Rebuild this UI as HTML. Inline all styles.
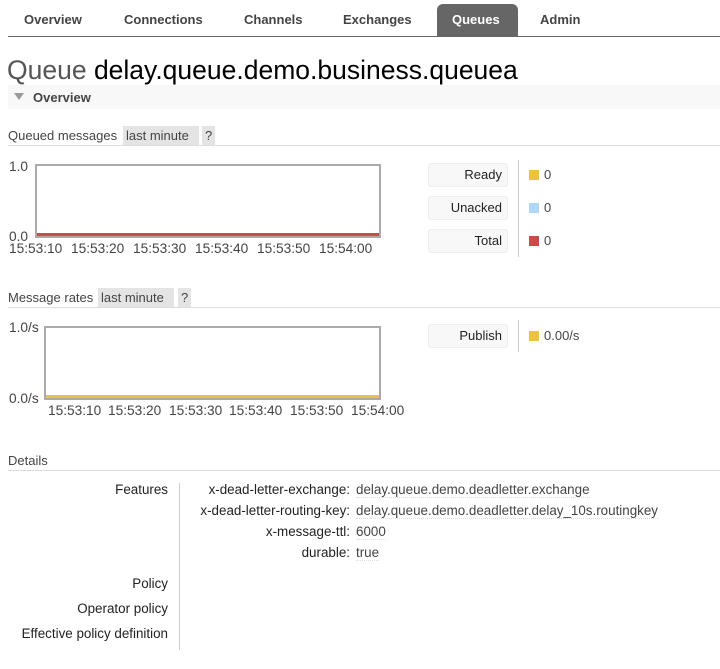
<!DOCTYPE html>
<html><head><meta charset="utf-8"><style>
*{margin:0;padding:0;box-sizing:border-box}
body{width:720px;height:669px;background:#fff;font-family:"Liberation Sans",sans-serif;color:#444;position:relative;overflow:hidden;font-size:13px}
.a{position:absolute;white-space:nowrap}
.tab{position:absolute;top:12px;font-weight:bold;font-size:13px;color:#444}
.hl{position:absolute;height:1px;background:#ddd}
.btn{position:absolute;background:#e4e4e4;height:19px;line-height:19px;padding:0 3px;font-size:13px}
.chart{position:absolute;border:2px solid #aaa;background:#fff}
.leg{position:absolute;left:428px;width:80px;height:24px;background:#f8f8f8;border:1px solid #eee;border-radius:3px;text-align:right;padding-right:5px;line-height:22px;color:#222}
.sq{position:absolute;left:529px;width:10px;height:10px}
.val{position:absolute;left:544px;color:#444}
.vl{position:absolute;width:1px;background:#ccc}
.t{font-size:13.7px;color:#444}
.d{font-size:13.4px}
.k{position:absolute;right:370px;text-align:right;color:#222}
.v{position:absolute;left:356px;color:#444;border-bottom:1px dotted #ddd}
</style></head><body>
<div class="a" style="left:437px;top:4px;width:81px;height:33px;background:#666;border-radius:6px 6px 0 0"></div>
<div class="tab" style="left:24px">Overview</div>
<div class="tab" style="left:124px">Connections</div>
<div class="tab" style="left:244px">Channels</div>
<div class="tab" style="left:343px">Exchanges</div>
<div class="tab" style="left:452px;color:#fff">Queues</div>
<div class="tab" style="left:540px">Admin</div>
<div class="a" style="left:8px;top:36px;width:712px;height:1px;background:#666"></div>

<div class="a" style="left:7px;top:55px;font-size:26.5px;color:#555">Queue <span style="color:#000">delay.queue.demo.business.queuea</span></div>
<div class="a" style="left:8px;top:85px;width:712px;height:24px;background:#f8f8f8"></div>
<div class="a" style="left:14px;top:93px;width:0;height:0;border-left:5px solid transparent;border-right:5px solid transparent;border-top:7px solid #999"></div>
<div class="a" style="left:33px;top:90px;font-weight:bold;color:#444">Overview</div>

<div class="a" style="left:8px;top:128px">Queued messages</div>
<div class="btn" style="left:123px;top:126px;width:76px">last minute</div>
<div class="btn" style="left:202px;top:126px;width:13px">?</div>
<div class="hl" style="left:8px;top:145px;width:712px"></div>

<div class="chart" style="left:35px;top:164px;width:346px;height:74px"><div style="position:absolute;left:0;right:0;bottom:0;height:3px;background:#c94b4b"></div></div>
<div class="a t" style="left:9px;top:159px">1.0</div>
<div class="a t" style="left:9px;top:229px">0.0</div>
<div class="a t" style="left:9px;top:241px">15:53:10</div>
<div class="a t" style="left:71px;top:241px">15:53:20</div>
<div class="a t" style="left:133px;top:241px">15:53:30</div>
<div class="a t" style="left:195px;top:241px">15:53:40</div>
<div class="a t" style="left:257px;top:241px">15:53:50</div>
<div class="a t" style="left:319px;top:241px">15:54:00</div>

<div class="leg" style="top:163px">Ready</div>
<div class="leg" style="top:196px">Unacked</div>
<div class="leg" style="top:229px">Total</div>
<div class="vl" style="left:518px;top:160px;height:97px"></div>
<div class="sq" style="top:170px;background:#edc240"></div><div class="val" style="top:167px">0</div>
<div class="sq" style="top:203px;background:#afd8f8"></div><div class="val" style="top:200px">0</div>
<div class="sq" style="top:236px;background:#cb4b4b"></div><div class="val" style="top:233px">0</div>

<div class="a" style="left:8px;top:290px">Message rates</div>
<div class="btn" style="left:98px;top:288px;width:76px">last minute</div>
<div class="btn" style="left:178px;top:288px;width:13px">?</div>
<div class="hl" style="left:8px;top:307px;width:712px"></div>

<div class="chart" style="left:44px;top:326px;width:337px;height:74px"><div style="position:absolute;left:0;right:0;bottom:0;height:3px;background:#edc240"></div></div>
<div class="a t" style="left:9px;top:320px">1.0/s</div>
<div class="a t" style="left:9px;top:391px">0.0/s</div>
<div class="a t" style="left:48px;top:403px">15:53:10</div>
<div class="a t" style="left:108px;top:403px">15:53:20</div>
<div class="a t" style="left:169px;top:403px">15:53:30</div>
<div class="a t" style="left:229px;top:403px">15:53:40</div>
<div class="a t" style="left:290px;top:403px">15:53:50</div>
<div class="a t" style="left:351px;top:403px">15:54:00</div>
<div class="leg" style="top:324px">Publish</div>
<div class="vl" style="left:518px;top:320px;height:32px"></div>
<div class="sq" style="top:331px;background:#edc240"></div><div class="val" style="top:328px">0.00/s</div>

<div class="a" style="left:8px;top:453px">Details</div>
<div class="hl" style="left:8px;top:470px;width:712px"></div>
<div class="a d" style="right:552px;top:482px;color:#222">Features</div>
<div class="vl" style="left:179px;top:483px;height:167px"></div>
<div class="k d" style="top:482px">x-dead-letter-exchange:</div><div class="v d" style="top:482px">delay.queue.demo.deadletter.exchange</div>
<div class="k d" style="top:503px">x-dead-letter-routing-key:</div><div class="v d" style="top:503px">delay.queue.demo.deadletter.delay_10s.routingkey</div>
<div class="k d" style="top:524px">x-message-ttl:</div><div class="v d" style="top:524px">6000</div>
<div class="k d" style="top:545px">durable:</div><div class="v d" style="top:545px">true</div>
<div class="a d" style="right:552px;top:576px;color:#222">Policy</div>
<div class="a d" style="right:552px;top:601px;color:#222">Operator policy</div>
<div class="a d" style="right:552px;top:626px;color:#222">Effective policy definition</div>
</body></html>
